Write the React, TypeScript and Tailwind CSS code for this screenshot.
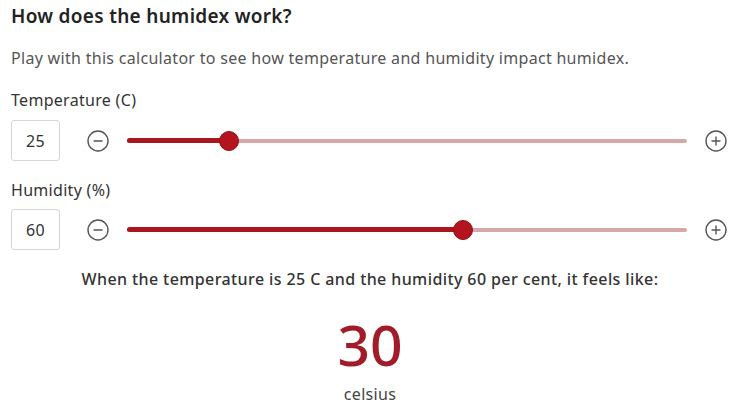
import { useState } from 'react';
import { CircleMinus, CirclePlus } from 'lucide-react';

type SliderRowProps = {
  value: number;
  min: number;
  max: number;
  onChange: (v: number) => void;
};

function SliderRow({ value, min, max, onChange }: SliderRowProps) {
  const pct = ((value - min) / (max - min)) * 100;
  return (
    <div className="flex items-center">
      <div className="w-[49px] h-[41px] border border-[#d6d6d6] rounded-[3px] flex items-center justify-center text-[16px] text-[#333]">
        {value}
      </div>
      <button
        className="ml-[26px] text-[#555]"
        onClick={() => onChange(Math.max(min, value - 1))}
      >
        <CircleMinus size={24} strokeWidth={1.4} />
      </button>
      <div className="relative flex-1 h-[20px] mx-[17px] flex items-center">
        <div className="w-full h-[4px] rounded-full bg-[#d8a7aa]" />
        <div
          className="absolute left-0 h-[5px] rounded-full bg-[#a9161e]"
          style={{ width: `${pct}%` }}
        />
        <div
          className="absolute w-[20px] h-[20px] -ml-[10px] rounded-full bg-[#b3141d] border border-[#8e1016]"
          style={{ left: `${pct}%` }}
        />
      </div>
      <button
        className="mr-[1px] text-[#555]"
        onClick={() => onChange(Math.min(max, value + 1))}
      >
        <CirclePlus size={24} strokeWidth={1.4} />
      </button>
    </div>
  );
}

export default function App() {
  const [temp, setTemp] = useState(25);
  const [hum, setHum] = useState(60);

  return (
    <div className="w-[740px] h-[408px] bg-white px-[11px] pt-[4px] font-['Noto_Sans',sans-serif] tracking-[0.3px] overflow-hidden">
      <h2 className="text-[19px] leading-[24px] font-semibold text-[#222]">
        How does the humidex work?
      </h2>
      <p className="mt-[19px] text-[16px] leading-[22px] text-[#555]">
        Play with this calculator to see how temperature and humidity impact humidex.
      </p>
      <p className="mt-[20px] text-[16px] leading-[22px] text-[#333]">Temperature (C)</p>
      <div className="mt-[9px]">
        <SliderRow value={temp} min={20} max={47.5} onChange={setTemp} />
      </div>
      <p className="mt-[18px] text-[16px] leading-[22px] text-[#333]">Humidity (%)</p>
      <div className="mt-[8px]">
        <SliderRow value={hum} min={0} max={100} onChange={setHum} />
      </div>
      <p className="mt-[18px] text-[16px] leading-[22px] font-medium tracking-[0.4px] text-[#333] text-center">
        When the temperature is {temp} C and the humidity {hum} per cent, it feels like:
      </p>
      <div className="mt-[20px] text-[57px] leading-[68px] font-medium tracking-normal text-[#a11b28] text-center">
        30
      </div>
      <p className="mt-[5px] text-[16px] leading-[22px] text-[#444] text-center">celsius</p>
    </div>
  );
}
